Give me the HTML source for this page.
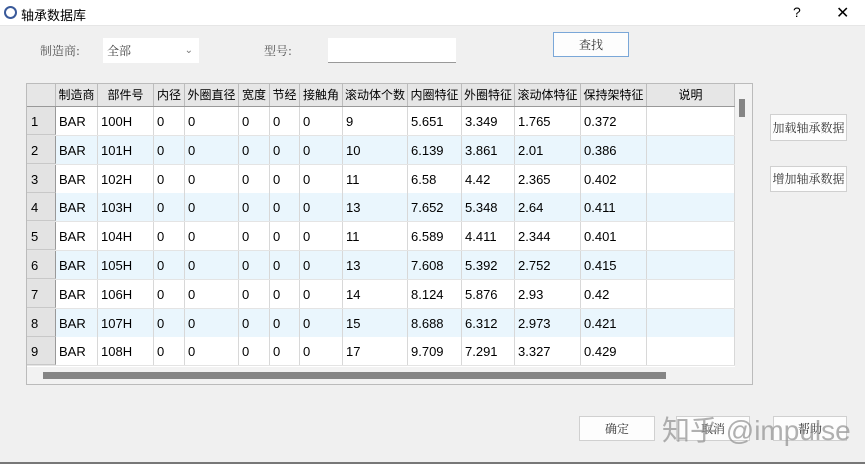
<!DOCTYPE html><html><head><meta charset="utf-8"><style>
*{margin:0;padding:0;box-sizing:border-box}
body{width:865px;height:464px;background:#f0f0f0;font-family:"Liberation Sans","Noto Sans CJK SC",sans-serif;position:relative;overflow:hidden;font-size:12px;color:#000}
.a{position:absolute}
.btn{position:absolute;background:#fdfdfd;border:1px solid #d0d0d0;font-family:"Noto Serif CJK SC",serif;font-size:12px;text-align:center;color:#333}
.c{position:absolute;height:100%;border-right:1px solid #d8d8d8;padding-left:3px;white-space:nowrap;overflow:hidden}
.h .c{border-right:1px solid #bcbcbc;text-align:center;padding:0;background:#e6e6e6}
.r{position:absolute;left:27px;width:708px;height:29px;line-height:29px;font-size:13px;border-bottom:1px solid #e4e4e4}
.r.h{font-size:12px}
.rn{position:absolute;left:0;width:29px;height:100%;background:#e3e3e3;border-right:1px solid #999;border-bottom:1px solid #c8c8c8;padding-left:4px}
</style></head><body>
<div class="a" style="left:0;top:0;width:865px;height:26px;background:#fff;border-bottom:1px solid #e6e6e6"></div>
<div class="a" style="left:4px;top:6px;width:13px;height:13px;border:2px solid #3a5a9a;border-radius:50%"></div>
<div class="a" style="left:21px;top:5px;font-size:13px">轴承数据库</div>
<div class="a" style="left:793px;top:4px;font-size:14px">?</div>
<div class="a" style="left:836px;top:3px;font-size:16px">✕</div>
<div class="a" style="left:40px;top:42px;color:#555;font-family:'Noto Serif CJK SC',serif">制造商:</div>
<div class="a" style="left:103px;top:38px;width:96px;height:25px;background:#fff;padding:4px 4px;color:#444;font-family:'Noto Serif CJK SC',serif">全部<span style="position:absolute;right:6px;top:3px;font-size:10px;color:#777">⌄</span></div>
<div class="a" style="left:264px;top:42px;color:#555;font-family:'Noto Serif CJK SC',serif">型号:</div>
<div class="a" style="left:328px;top:38px;width:128px;height:25px;background:#fff;border-bottom:1px solid #999"></div>
<div class="btn" style="left:553px;top:32px;width:76px;height:25px;line-height:23px;border-color:#7aa7d8">查找</div>
<div class="a" style="left:26px;top:83px;width:727px;height:302px;background:#fff;border:1px solid #bbb"></div>
<div class="r h" style="top:84px;height:23px;line-height:23px;border-bottom:1px solid #999">
<div class="c" style="left:0;width:29px"></div>
<div class="c" style="left:29px;width:42px">制造商</div><div class="c" style="left:71px;width:56px">部件号</div><div class="c" style="left:127px;width:31px">内径</div><div class="c" style="left:158px;width:54px">外圈直径</div><div class="c" style="left:212px;width:31px">宽度</div><div class="c" style="left:243px;width:30px">节经</div><div class="c" style="left:273px;width:43px">接触角</div><div class="c" style="left:316px;width:65px">滚动体个数</div><div class="c" style="left:381px;width:54px">内圈特征</div><div class="c" style="left:435px;width:53px">外圈特征</div><div class="c" style="left:488px;width:66px">滚动体特征</div><div class="c" style="left:554px;width:66px">保持架特征</div><div class="c" style="left:620px;width:88px">说明</div></div>
<div id="rows"></div>
<script>
var d=[["100H",9,"5.651","3.349","1.765","0.372"],["101H",10,"6.139","3.861","2.01","0.386"],["102H",11,"6.58","4.42","2.365","0.402"],["103H",13,"7.652","5.348","2.64","0.411"],["104H",11,"6.589","4.411","2.344","0.401"],["105H",13,"7.608","5.392","2.752","0.415"],["106H",14,"8.124","5.876","2.93","0.42"],["107H",15,"8.688","6.312","2.973","0.421"],["108H",17,"9.709","7.291","3.327","0.429"]];
var L=[29,71,127,158,212,243,273,316,381,435,488,554,620],W=[42,56,31,54,31,30,43,65,54,53,66,66,88];
var h="";d.forEach(function(r,i){var v=["BAR",r[0],0,0,0,0,0,r[1],r[2],r[3],r[4],r[5],""];
h+='<div class="r" style="top:'+(107+i*28.8)+'px;background:'+(i%2?'#eaf6fd':'#fff')+'"><div class="rn">'+(i+1)+'</div>';
v.forEach(function(x,j){h+='<div class="c" style="left:'+L[j]+'px;width:'+W[j]+'px">'+x+'</div>'});h+='</div>'});
document.getElementById("rows").innerHTML=h;
</script>
<div class="a" style="left:27px;top:367px;width:708px;height:17px;background:#f2f2f2"></div>
<div class="a" style="left:43px;top:372px;width:623px;height:7px;background:#858585"></div>
<div class="a" style="left:735px;top:84px;width:17px;height:300px;background:#f2f2f2"></div>
<div class="a" style="left:739px;top:99px;width:6px;height:18px;background:#858585"></div>
<div class="btn" style="left:770px;top:114px;width:77px;height:27px;line-height:25px">加载轴承数据</div>
<div class="btn" style="left:770px;top:166px;width:77px;height:26px;line-height:24px">增加轴承数据</div>
<div class="btn" style="left:579px;top:416px;width:76px;height:25px;line-height:23px">确定</div>
<div class="btn" style="left:676px;top:416px;width:74px;height:25px;line-height:23px">取消</div>
<div class="btn" style="left:773px;top:416px;width:74px;height:25px;line-height:23px">帮助</div>
<div class="a" style="left:662px;top:409px;font-size:28px;color:rgba(150,150,150,0.75);white-space:nowrap">知乎 @impulse</div>
<div class="a" style="left:0;top:462px;width:865px;height:2px;background:#777"></div>
</body></html>
